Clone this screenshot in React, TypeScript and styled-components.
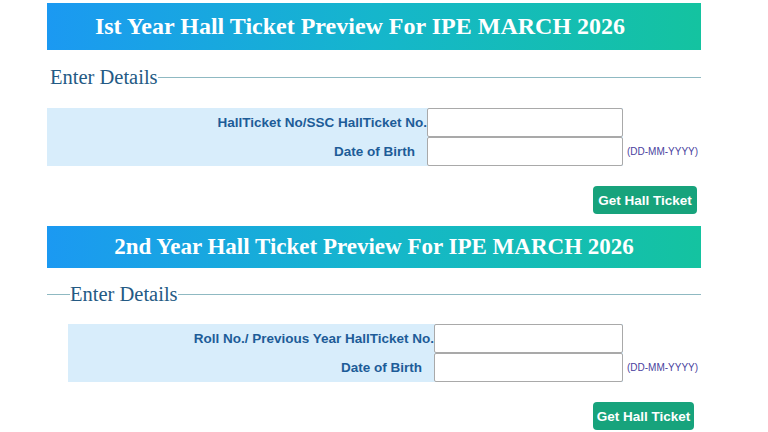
import styled, { createGlobalStyle } from "styled-components";

const GlobalStyle = createGlobalStyle`
  html, body {
    margin: 0;
    padding: 0;
    background: #fff;
  }
  body {
    font-family: "Liberation Sans", Arial, sans-serif;
  }
`;

const Page = styled.div`
  width: 654px;
  padding: 3px 0 0 47px;
`;

const Section = styled.section<{ $gapTop?: number }>`
  display: flex;
  flex-direction: column;
  margin-top: ${(p) => p.$gapTop ?? 0}px;
`;

const Banner = styled.div<{ $h: number; $size: number; $shift?: number }>`
  height: ${(p) => p.$h}px;
  display: flex;
  align-items: center;
  justify-content: center;
  padding-right: ${(p) => p.$shift ?? 0}px;
  background: linear-gradient(90deg, #1b99f2 0%, #15b6cc 50%, #14c3a0 100%);
  color: #fff;
  font-family: "Liberation Serif", "Times New Roman", serif;
  font-weight: bold;
  font-size: ${(p) => p.$size}px;
  white-space: nowrap;
`;

const Legend = styled.div<{ $lead?: boolean; $top: number }>`
  display: flex;
  align-items: center;
  margin-top: ${(p) => p.$top}px;
  height: 24px;
  font-family: "Liberation Serif", "Times New Roman", serif;
  font-size: 20.5px;
  color: #245a84;

  &::before {
    content: "";
    display: ${(p) => (p.$lead ? "block" : "none")};
    width: 23px;
    border-top: 1px solid #8fb9c2;
  }

  &::after {
    content: "";
    flex: 1;
    border-top: 1px solid #8fb9c2;
  }

  span {
    padding-left: ${(p) => (p.$lead ? 0 : 3)}px;
  }
`;

const FormRow = styled.div<{ $indent: number; $top: number }>`
  display: flex;
  align-items: flex-end;
  margin-top: ${(p) => p.$top}px;
  padding-left: ${(p) => p.$indent}px;
`;

const FieldGrid = styled.div<{ $labelW: number; $inputW: number }>`
  display: grid;
  grid-template-columns: ${(p) => p.$labelW}px ${(p) => p.$inputW}px;
  background: #d8edfb;
`;

const Label = styled.label<{ $tight?: boolean }>`
  display: flex;
  align-items: center;
  justify-content: flex-end;
  padding-right: ${(p) => (p.$tight ? 0 : 12)}px;
  font-size: 13.5px;
  font-weight: bold;
  color: #1d5c98;
  white-space: nowrap;
`;

const Input = styled.input`
  box-sizing: border-box;
  height: 29px;
  width: 100%;
  margin: 0;
  border: 1px solid #a9a9a9;
  border-radius: 2px;
  background: #fff;
  font-size: 13px;
  padding: 2px 6px;
`;

const Hint = styled.span`
  padding: 0 0 9px 4px;
  font-size: 10px;
  color: #4a3f9e;
`;

const Actions = styled.div<{ $top: number; $right: number }>`
  display: flex;
  justify-content: flex-end;
  margin-top: ${(p) => p.$top}px;
  padding-right: ${(p) => p.$right}px;
`;

const Button = styled.button<{ $w: number }>`
  width: ${(p) => p.$w}px;
  height: 28px;
  padding: 0;
  border: none;
  border-radius: 4px;
  background: #17a37c;
  color: #fff;
  font-family: "Liberation Sans", Arial, sans-serif;
  font-size: 13.5px;
  font-weight: bold;
  white-space: nowrap;
  cursor: pointer;
`;

export default function App() {
  return (
    <>
      <GlobalStyle />
      <Page>
        <Section>
          <Banner $h={47} $size={24} $shift={28}>
            Ist Year Hall Ticket Preview For IPE MARCH 2026
          </Banner>
          <Legend $top={15}>
            <span>Enter Details</span>
          </Legend>
          <FormRow $indent={0} $top={19}>
            <FieldGrid $labelW={380} $inputW={196}>
              <Label $tight>HallTicket No/SSC HallTicket No.</Label>
              <Input type="text" name="htno" />
              <Label>Date of Birth</Label>
              <Input type="text" name="dob" />
            </FieldGrid>
            <Hint>(DD-MM-YYYY)</Hint>
          </FormRow>
          <Actions $top={20} $right={4}>
            <Button $w={104}>Get Hall Ticket</Button>
          </Actions>
        </Section>

        <Section $gapTop={12}>
          <Banner $h={42} $size={23} $shift={-4}>
            2nd Year Hall Ticket Preview For IPE MARCH 2026
          </Banner>
          <Legend $lead $top={14}>
            <span>Enter Details</span>
          </Legend>
          <FormRow $indent={21} $top={18}>
            <FieldGrid $labelW={366} $inputW={189}>
              <Label $tight>Roll No./ Previous Year HallTicket No.</Label>
              <Input type="text" name="rollno" />
              <Label>Date of Birth</Label>
              <Input type="text" name="dob2" />
            </FieldGrid>
            <Hint>(DD-MM-YYYY)</Hint>
          </FormRow>
          <Actions $top={20} $right={7}>
            <Button $w={101}>Get Hall Ticket</Button>
          </Actions>
        </Section>
      </Page>
    </>
  );
}
